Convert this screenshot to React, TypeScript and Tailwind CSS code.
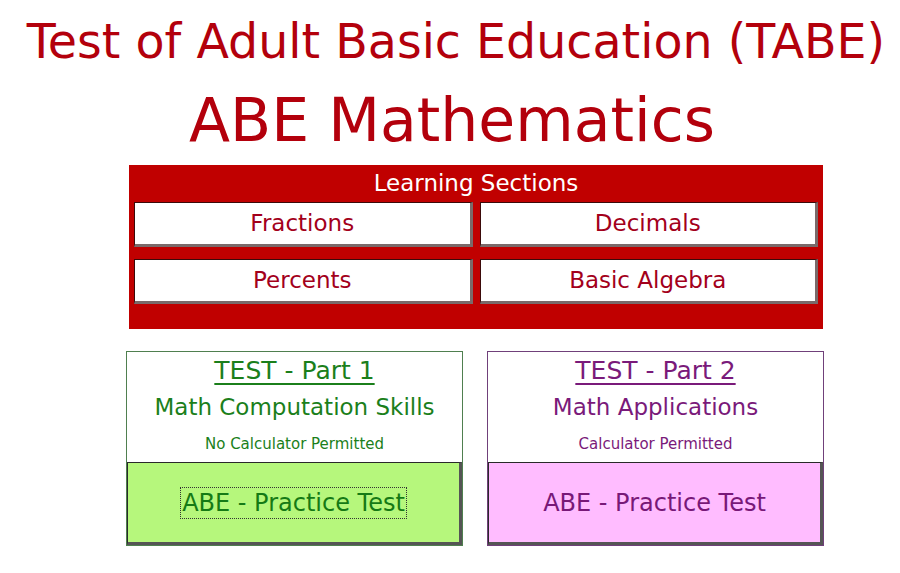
import React from "react";

const comic = { fontFamily: '"Comic Sans MS", "DejaVu Sans", sans-serif' };

function SectionButton({ label }: { label: string }) {
  return (
    <button
      type="button"
      className="flex h-[45px] items-center justify-center border border-[#3b0a0a] border-r-[3px] border-b-[3px] border-r-[#7a6a6a] border-b-[#7a6a6a] bg-white text-[23px] text-[#a3001b]"
    >
      {label}
    </button>
  );
}

type TestCardProps = {
  part: string;
  name: string;
  note: string;
  tone: "green" | "purple";
  focused?: boolean;
};

function TestCard({ part, name, note, tone, focused }: TestCardProps) {
  const green = tone === "green";
  return (
    <div className={`flex h-[195px] w-[337px] flex-col border ${green ? "border-[#4f7f4f]" : "border-[#70407a]"}`}>
      <div
        className={`flex flex-1 flex-col items-center pt-[4px] ${green ? "text-[#1b7f1b]" : "text-[#7a1a7a]"}`}
      >
        <div className="text-[25px] leading-[30px] underline decoration-[2px] underline-offset-[4px]">{part}</div>
        <div className="mt-[6px] text-[23px] leading-[30px]">{name}</div>
        <div className="mt-[12px] text-[15px] leading-[20px]">{note}</div>
      </div>
      <button
        type="button"
        className={`flex h-[83px] items-center justify-center border-t border-l border-[#2a2a2a] border-r-[3px] border-b-[3px] border-r-[#555] border-b-[#555] text-[24px] ${
          green ? "bg-[#b6f77c] text-[#157a15]" : "bg-[#ffbcff] text-[#781878]"
        }`}
      >
        <span className={focused ? "border border-dotted border-[#333] px-[1px] leading-[30px]" : "leading-[30px]"}>
          ABE - Practice Test
        </span>
      </button>
    </div>
  );
}

export default function App() {
  return (
    <div className="min-h-[573px] w-[900px] bg-white pt-[13px]" style={comic}>
      <h1 className="pl-[12px] text-center text-[47.5px] leading-[58px] text-[#b3000c]">
        Test of Adult Basic Education (TABE)
      </h1>
      <h2 className="mt-[13px] pl-[4px] text-center text-[60px] leading-[72px] text-[#b3000c]">ABE Mathematics</h2>

      <div className="mt-[9px] ml-[129px] w-[694px] bg-[#c00000] px-[5px] pb-[25px]">
        <div className="text-center text-[23px] leading-[37px] text-white">Learning Sections</div>
        <div className="grid grid-cols-2 gap-x-[7px] gap-y-[12px]">
          <SectionButton label="Fractions" />
          <SectionButton label="Decimals" />
          <SectionButton label="Percents" />
          <SectionButton label="Basic Algebra" />
        </div>
      </div>

      <div className="mt-[22px] ml-[126px] flex gap-[24px]">
        <TestCard part="TEST - Part 1" name="Math Computation Skills" note="No Calculator Permitted" tone="green" focused />
        <TestCard part="TEST - Part 2" name="Math Applications" note="Calculator Permitted" tone="purple" />
      </div>
    </div>
  );
}
